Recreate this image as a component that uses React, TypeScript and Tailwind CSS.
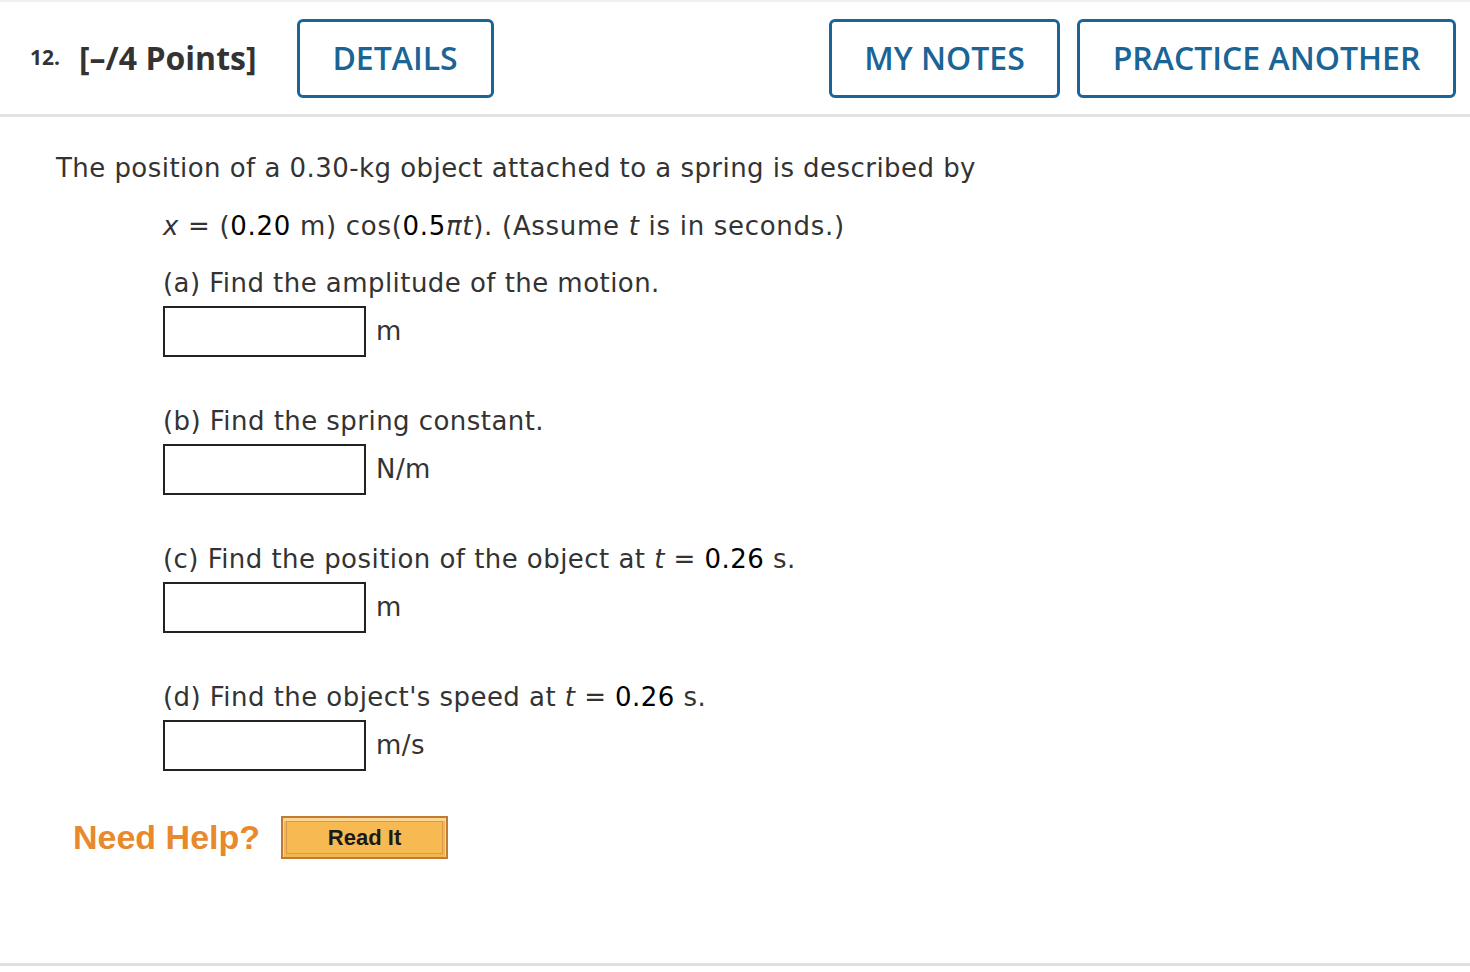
import React from 'react';

const body = { fontFamily: '"DejaVu Sans", Verdana, sans-serif' };
const head = { fontFamily: '"Open Sans", Arial, sans-serif' };

const Part = ({ label, unit }: { label: React.ReactNode; unit: string }) => (
  <div className="flex flex-col">
    <p className="leading-[36px]">{label}</p>
    <div className="mt-[5px] flex items-center gap-[10px]">
      <div className="h-[51px] w-[203px] border-2 border-[#222] bg-white" />
      <span>{unit}</span>
    </div>
  </div>
);

export default function App() {
  return (
    <div className="min-h-[972px] w-[1470px] bg-white">
      <div className="h-[2px] bg-[#f0f0f0]" />
      {/* question header */}
      <div className="flex h-[115px] items-center border-b-[3px] border-[#e3e3e3] pl-[30px] pr-[14px]" style={head}>
        <span className="text-[21px] font-bold text-[#333]">12.</span>
        <span className="ml-[19px] text-[32px] font-bold text-[#333]">[–/4 Points]</span>
        <button className="ml-[40px] h-[79px] w-[197px] rounded-[6px] border-[3px] border-[#1a6496] text-[32px] font-semibold text-[#1a6496]">
          DETAILS
        </button>
        <div className="flex-1" />
        <button className="h-[79px] w-[231px] rounded-[6px] border-[3px] border-[#1a6496] text-[32px] font-semibold text-[#1a6496]">
          MY NOTES
        </button>
        <button className="ml-[17px] h-[79px] w-[379px] rounded-[6px] border-[3px] border-[#1a6496] text-[32px] font-semibold text-[#1a6496]">
          PRACTICE ANOTHER
        </button>
      </div>

      <div className="pl-[56px] pt-[33px] text-[26px] tracking-[0.45px] text-[#333]" style={body}>
        <p className="leading-[36px]">The position of a 0.30-kg object attached to a spring is described by</p>
        <div className="ml-[107px] flex flex-col">
          <p className="mt-[22px] leading-[36px] tracking-[0.7px]">
            <i>x</i> = (<span className="text-black">0.20</span> m) cos(<span className="text-black">0.5</span><i>πt</i>). (Assume <i>t</i> is in seconds.)
          </p>
          <div className="mt-[21px] flex flex-col gap-[46px]">
            <Part label="(a) Find the amplitude of the motion." unit="m" />
            <Part label="(b) Find the spring constant." unit="N/m" />
            <Part
              label={<>(c) Find the position of the object at <i>t</i> = <span className="text-black">0.26</span> s.</>}
              unit="m"
            />
            <Part
              label={<>(d) Find the object's speed at <i>t</i> = <span className="text-black">0.26</span> s.</>}
              unit="m/s"
            />
          </div>
        </div>
        <div className="mt-[41px] ml-[17px] flex items-center gap-[21px]">
          <span className="text-[34px] font-bold tracking-normal text-[#e8892c]" style={{ fontFamily: '"Liberation Sans", Arial, sans-serif' }}>
            Need Help?
          </span>
          <button
            className="flex h-[43px] w-[167px] items-center justify-center border-2 border-[#c07a35] bg-[#f5b64f] p-[3px] shadow-[inset_0_2px_0_1px_#fbd690]"
            style={{ fontFamily: '"Liberation Sans", Arial, sans-serif' }}
          >
            <span className="flex h-full w-full items-center justify-center border border-[#d59a4f] bg-[#f7ba52] text-[22px] font-bold tracking-normal text-[#1a1a1a]">
              Read It
            </span>
          </button>
        </div>
      </div>
      <div className="mt-[100px] h-[3px] bg-[#e0e0e0]" />
    </div>
  );
}
